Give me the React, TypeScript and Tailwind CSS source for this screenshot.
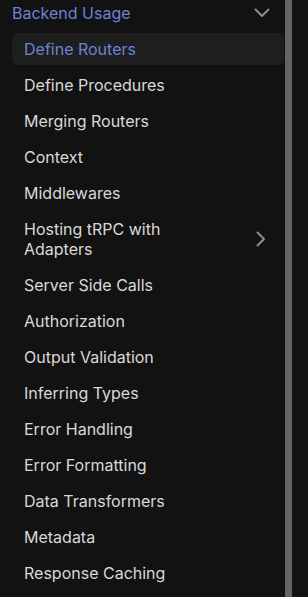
import React from "react";

const items = [
  "Define Routers",
  "Define Procedures",
  "Merging Routers",
  "Context",
  "Middlewares",
  "Hosting tRPC with Adapters",
  "Server Side Calls",
  "Authorization",
  "Output Validation",
  "Inferring Types",
  "Error Handling",
  "Error Formatting",
  "Data Transformers",
  "Metadata",
  "Response Caching",
];

function ChevronDown() {
  return (
    <svg width="16" height="10" viewBox="0 0 16 10" fill="none">
      <path
        d="M1.5 1.5 8 8l6.5-6.5"
        stroke="#8c8c8c"
        strokeWidth="2"
        strokeLinecap="round"
        strokeLinejoin="round"
      />
    </svg>
  );
}

function ChevronRight() {
  return (
    <svg width="10" height="16" viewBox="0 0 10 16" fill="none">
      <path
        d="M1.5 1.5 8 8l-6.5 6.5"
        stroke="#8c8c8c"
        strokeWidth="2"
        strokeLinecap="round"
        strokeLinejoin="round"
      />
    </svg>
  );
}

export default function App() {
  return (
    <div
      className="flex h-[597px] w-[308px] overflow-hidden bg-[#121212]"
      style={{ fontFamily: "Inter, 'Noto Sans', sans-serif" }}
    >
      {/* Sidebar content */}
      <div className="w-[285px] pl-3 pr-px">
        {/* Category header */}
        <div className="flex h-[26px] items-center justify-between">
          <span className="text-[16px] leading-5 text-[#6b84d6]">Backend Usage</span>
          <span className="mr-[14px] flex">
            <ChevronDown />
          </span>
        </div>

        {/* Items */}
        <ul className="mt-[7px] flex flex-col gap-1">
          {items.map((item, i) => {
            const active = i === 0;
            const hasChildren = item.startsWith("Hosting");
            return (
              <li
                key={item}
                className={`flex items-center justify-between rounded-md py-1.5 pl-3 pr-4 text-[16px] leading-5 ${
                  active ? "bg-[#1e1e1e] text-[#6b84d6]" : "text-[#d9d9d9]"
                }`}
              >
                <span className={hasChildren ? "max-w-[160px]" : ""}>{item}</span>
                {hasChildren && (
                  <span className="mr-[2px] flex">
                    <ChevronRight />
                  </span>
                )}
              </li>
            );
          })}
        </ul>
      </div>

      {/* Scrollbar */}
      <div className="h-full w-[7px] bg-[#636363]" />
    </div>
  );
}
